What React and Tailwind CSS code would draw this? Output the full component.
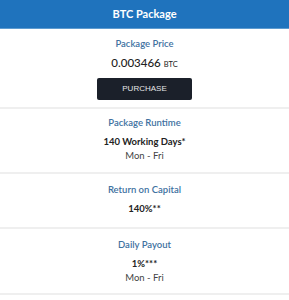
import React from "react";

const sections = [
  { label: "Package Runtime", value: "140 Working Days*", sub: "Mon - Fri", pad: "pt-[7px] pb-[9px]" },
  { label: "Return on Capital", value: "140%**", pad: "pt-[9px] pb-[11px]" },
  { label: "Daily Payout", value: "1%***", sub: "Mon - Fri", pad: "pt-[9px] pb-[8px]" },
];

export default function App() {
  return (
    <div
      className="w-[289px] h-[300px] bg-white overflow-hidden text-center"
      style={{ fontFamily: "Lato, 'Open Sans', sans-serif" }}
    >
      <div className="h-[29px] bg-[#1f73bd] border-b border-[#5d9bd0] flex items-center justify-center text-white font-bold text-[11px]">
        BTC Package
      </div>

      {/* price */}
      <div className="pt-[8px] pb-[7px] border-b-2 border-[#efefef] flex flex-col items-center">
        <div className="text-[9.5px] leading-[14px] font-semibold text-[#40719f]">Package Price</div>
        <div className="mt-[5px] h-[14px] flex items-baseline gap-[3px] text-[#222] leading-[14px]">
          <span className="text-[11.5px] font-medium">0.003466</span>
          <span className="text-[7.5px]">BTC</span>
        </div>
        <button
          className="mt-[8px] w-[95px] h-[22px] rounded-[2px] bg-[#1b202a] text-[#e6e6e6] text-[8px] leading-[22px]"
          style={{ fontFamily: "'Liberation Sans', Arial, sans-serif" }}
        >
          PURCHASE
        </button>
      </div>

      {sections.map((s) => (
        <div
          key={s.label}
          className={"border-b-2 border-[#efefef] flex flex-col items-center " + s.pad}
        >
          <div className="text-[9.5px] leading-[14px] font-semibold text-[#40719f]">{s.label}</div>
          <div className="mt-[5px] text-[9.5px] leading-[14px] font-bold text-[#222]">{s.value}</div>
          {s.sub && <div className="text-[9.5px] leading-[14px] text-[#444]">{s.sub}</div>}
        </div>
      ))}
    </div>
  );
}
